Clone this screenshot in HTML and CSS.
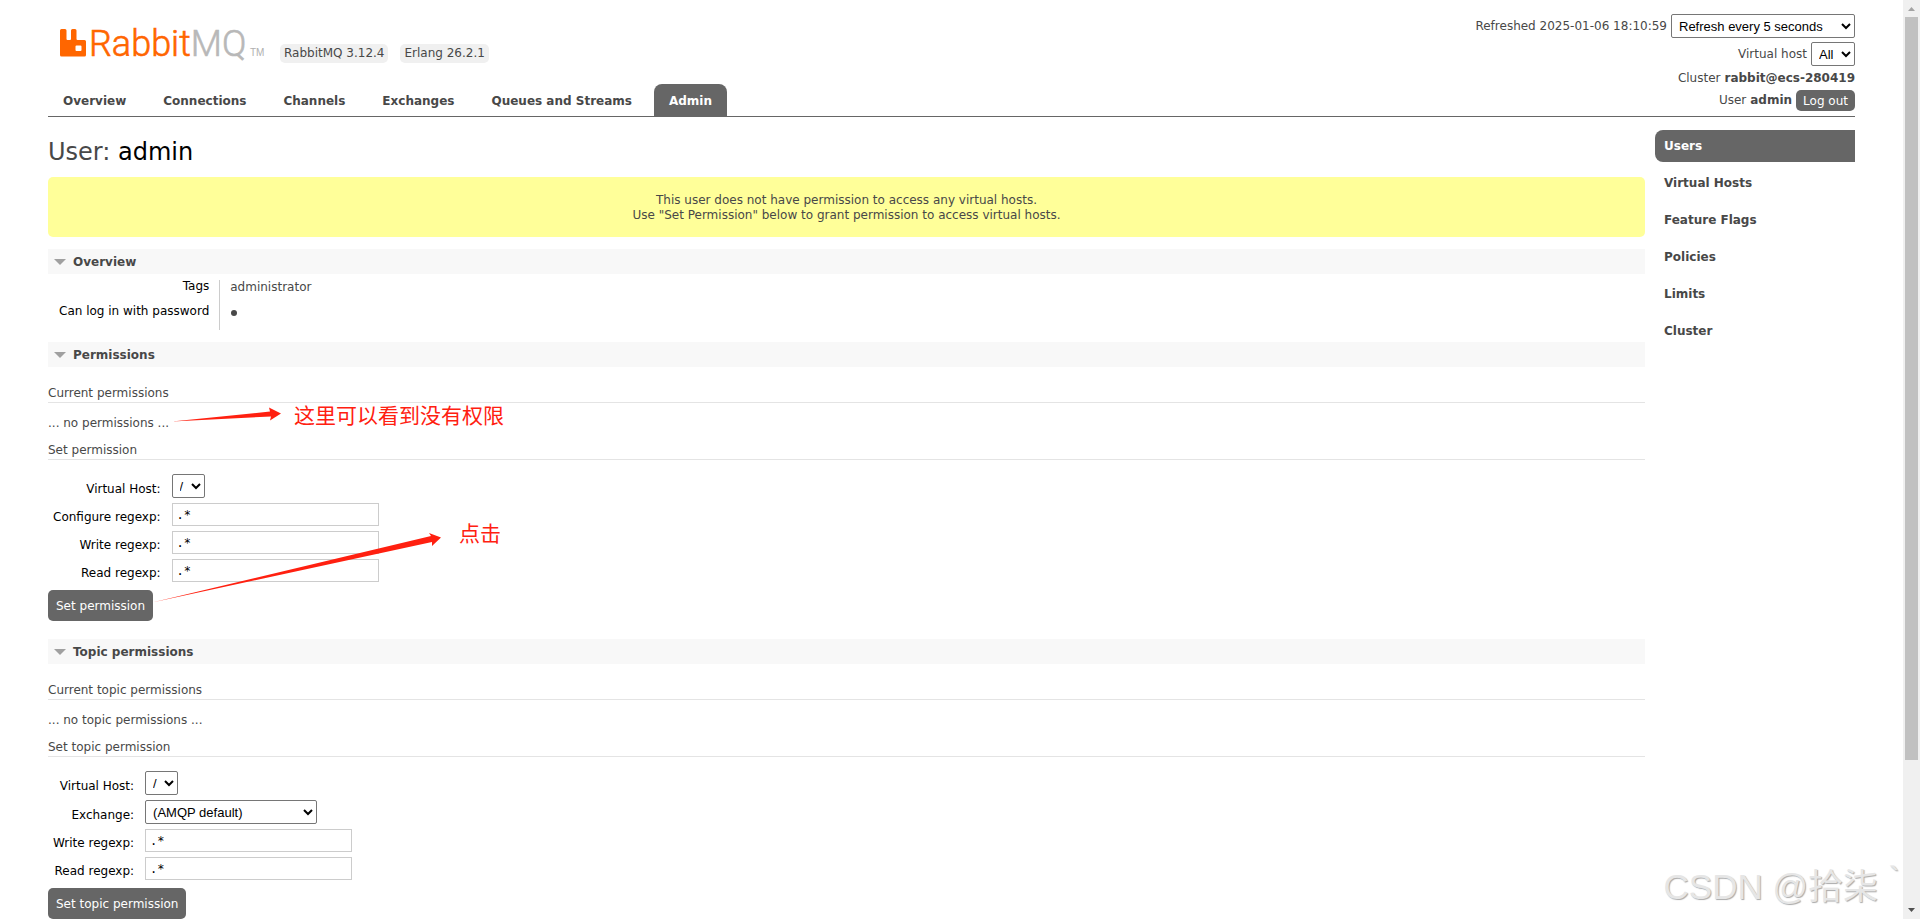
FILE: index.html
```html
<!DOCTYPE html>
<html lang="en">
<head>
<meta charset="utf-8">
<title>RabbitMQ Management</title>
<link rel="stylesheet" href="styles.css">
</head>
<body>
<div class="page">
  <header class="header">
    <div class="header-left">
      <div class="brand">
        <a class="logo" href="#" aria-label="RabbitMQ">
          <svg width="206" height="36" viewBox="0 0 206 36">
            <path class="logo-mark" d="M1.500 2h3.500q1.500 0 1.500 1.500v8.500q0 1 1 1h2.500q1 0 1-1V3.500q0-1.500 1.500-1.500h2.500q1.500 0 1.500 1.500v8.500q0 1 1 1h7q1.500 0 1.500 1.500v13.500q0 1.500-1.500 1.500h-23q-1.500 0-1.500-1.500V3.500q0-1.500 1.500-1.500zM16.500 18.500q-1 0-1 1v3.500q0 1 1 1h4q1 0 1-1v-3.500q0-1-1-1z"/>
            <text class="logo-text" x="29" y="29">Rabbit<tspan class="logo-grey">MQ</tspan></text>
            <text class="logo-tm" x="190" y="29">TM</text>
          </svg>
        </a>
        <span class="version">RabbitMQ 3.12.4</span>
        <span class="version">Erlang 26.2.1</span>
      </div>
      <nav class="tabs">
        <a href="#">Overview</a>
        <a href="#">Connections</a>
        <a href="#">Channels</a>
        <a href="#">Exchanges</a>
        <a href="#">Queues and Streams</a>
        <a href="#" class="selected">Admin</a>
      </nav>
    </div>
    <div class="status">
      <div class="status-row">
        <label for="refresh">Refreshed 2025-01-06 18:10:59</label>
        <select id="refresh" class="select-refresh"><option>Refresh every 5 seconds</option></select>
      </div>
      <div class="status-row">
        <label for="vhost">Virtual host</label>
        <select id="vhost" class="select-all"><option>All</option></select>
      </div>
      <div class="status-row">Cluster <b>rabbit@ecs-280419</b></div>
      <div class="status-row">User <b>admin</b> <button class="logout" type="button">Log out</button></div>
    </div>
  </header>

  <div class="columns">
    <main class="main">
      <h1>User: <b>admin</b></h1>
      <p class="warning">This user does not have permission to access any virtual hosts.<br>Use "Set Permission" below to grant permission to access virtual hosts.</p>

      <section>
        <h2>Overview</h2>
        <table class="facts">
          <tr><th scope="row">Tags</th><td>administrator</td></tr>
          <tr><th scope="row">Can log in with password</th><td><span class="dot"></span></td></tr>
        </table>
      </section>

      <section>
        <h2>Permissions</h2>
        <h3>Current permissions</h3>
        <p class="empty">... no permissions ...</p>
        <h3>Set permission</h3>
        <form class="form">
          <div class="fields">
            <label for="p-vhost">Virtual Host:</label>
            <select id="p-vhost" class="select-slash"><option>/</option></select>
            <label for="p-conf">Configure regexp:</label>
            <input id="p-conf" type="text" value=".*">
            <label for="p-write">Write regexp:</label>
            <input id="p-write" type="text" value=".*">
            <label for="p-read">Read regexp:</label>
            <input id="p-read" type="text" value=".*">
          </div>
          <button class="submit" type="button">Set permission</button>
        </form>
      </section>

      <section>
        <h2>Topic permissions</h2>
        <h3>Current topic permissions</h3>
        <p class="empty">... no topic permissions ...</p>
        <h3>Set topic permission</h3>
        <form class="form form-last">
          <div class="fields">
            <label for="t-vhost">Virtual Host:</label>
            <select id="t-vhost" class="select-slash"><option>/</option></select>
            <label for="t-exchange">Exchange:</label>
            <select id="t-exchange" class="select-exchange"><option>(AMQP default)</option></select>
            <label for="t-write">Write regexp:</label>
            <input id="t-write" type="text" value=".*">
            <label for="t-read">Read regexp:</label>
            <input id="t-read" type="text" value=".*">
          </div>
          <button class="submit" type="button">Set topic permission</button>
        </form>
      </section>
    </main>

    <nav class="side">
      <a href="#" class="selected">Users</a>
      <a href="#">Virtual Hosts</a>
      <a href="#">Feature Flags</a>
      <a href="#">Policies</a>
      <a href="#">Limits</a>
      <a href="#">Cluster</a>
    </nav>
  </div>

  <svg class="arrows" width="520" height="640" viewBox="0 0 520 640" aria-hidden="true">
    <path d="M172 421.500L270 411.500L269 407.500L281 413.500L270 420.500L271 416.500Z"/>
    <path d="M152 602.500L431 536L429 533L441 537.500L432 546L432 542Z"/>
  </svg>
  <span class="note note-permissions" lang="zh">这里可以看到没有权限</span>
  <span class="note note-click" lang="zh">点击</span>
  <span class="watermark" lang="zh">CSDN @拾柒｀</span>
</div>
<div class="scrollbar" aria-hidden="true">
  <svg width="17" height="17" viewBox="0 0 17 17"><path class="arrow-up" d="M5 11h7L8.500 7z"/></svg>
  <div class="track"><div class="thumb"></div></div>
  <svg width="17" height="17" viewBox="0 0 17 17"><path class="arrow-down" d="M5 6h7L8.500 10z"/></svg>
</div>
</body>
</html>
```

FILE: styles.css
```css
* { box-sizing: border-box; }

body {
  margin: 0;
  display: flex;
  min-height: 100vh;
  background: #fff;
  color: #484848;
  font: 12px/15px Verdana, "DejaVu Sans", sans-serif;
}

a { color: inherit; text-decoration: none; }
h1, h2, h3, p { margin: 0; font-weight: normal; }

.page {
  position: relative;
  flex: 1;
  min-width: 0;
  padding: 0 48px;
  overflow: hidden;
}

/* Header */
.header {
  display: flex;
  justify-content: space-between;
  padding-top: 14px;
  border-bottom: 1px solid #666;
}
.header-left {
  display: flex;
  flex-direction: column;
  justify-content: space-between;
}
.brand {
  display: flex;
  align-items: flex-end;
  gap: 12px;
  padding: 13px 0 0 12px;
}
.logo { display: block; height: 36px; margin-right: 2px; }
.logo svg { display: block; overflow: visible; }
.logo-mark { fill: #f60; fill-rule: evenodd; }
.logo-text {
  fill: #f60;
  stroke: #f60;
  stroke-width: 0.6px;
  font: 300 36px Roboto, sans-serif;
}
.logo-grey { fill: #b8b8b8; stroke: #b8b8b8; }
.logo-tm { fill: #b0b0b0; font: 10px "Liberation Sans", sans-serif; }
.version {
  padding: 2px 4px;
  border-radius: 5px;
  background: #f0f0f0;
}
.tabs { display: flex; gap: 7px; font-weight: bold; }
.tabs a {
  padding: 10px 15px 7px;
  border-radius: 8px 8px 0 0;
}
.tabs .selected { background: #666; color: #fff; }

.status {
  display: flex;
  flex-direction: column;
  gap: 4px;
  padding-bottom: 5px;
}
.status-row {
  display: flex;
  align-items: center;
  justify-content: flex-end;
  gap: 4px;
  min-height: 16px;
}
.logout {
  height: 21px;
  padding: 1px 7px 0;
  border: 0;
  border-radius: 5px;
  background: #666;
  color: #fff;
  font: 12px/15px Verdana, "DejaVu Sans", sans-serif;
}

select {
  height: 24px;
  margin: 0;
  padding: 0 3px;
  border: 1px solid #767676;
  border-radius: 2px;
  background-color: #fff;
  color: #000;
  font: 13px "Liberation Sans", Arial, sans-serif;
}
.select-refresh { width: 184px; }
.select-all { width: 44px; }
.select-slash { width: 33px; }
.select-exchange { width: 172px; }

/* Content */
.columns { display: flex; gap: 10px; padding-top: 13px; }
.main { flex: 1; min-width: 0; }
h1 {
  padding: 7px 0 10px;
  font-size: 24px;
  line-height: 30px;
}
h1 b { color: #000; font-weight: normal; }
.warning {
  padding: 16px 15px 14px;
  margin-bottom: 12px;
  border-radius: 5px;
  background: #ff9;
  text-align: center;
}
h2 {
  display: flex;
  align-items: center;
  gap: 7px;
  height: 25px;
  padding: 1px 0 0 6px;
  background: #f8f8f8;
  font-size: 12px;
  font-weight: bold;
}
h2::before {
  content: "";
  border: 6px solid transparent;
  border-top-color: #a0a0a0;
  border-bottom: 0;
}
h3 {
  height: 19px;
  padding-top: 2px;
  border-bottom: 1px solid #e4e4e4;
  font-size: 12px;
}
h2 + h3 { margin-top: 17px; }
.empty { padding: 13px 0 10px; }

.facts {
  margin: 6px 0 12px;
  border-collapse: collapse;
}
.facts tr { height: 25px; }
.facts th, .facts td { padding: 0 10px; vertical-align: top; }
.facts th {
  padding-left: 11px;
  border-right: 1px solid #ccc;
  color: #000;
  font-weight: normal;
  line-height: 13px;
  text-align: right;
}
.dot {
  display: block;
  width: 6px;
  height: 6px;
  margin: 5px 1px 0;
  border-radius: 3px;
  background: #484848;
}

.form { padding: 14px 0 18px; }
.form-last { padding-bottom: 0; }
.fields {
  display: grid;
  grid-template-columns: max-content max-content;
  column-gap: 11px;
  row-gap: 5px;
  padding: 0 0 8px 5px;
  justify-items: start;
}
.fields label {
  align-self: end;
  justify-self: end;
  padding-bottom: 1px;
  color: #000;
}
.fields input {
  width: 207px;
  height: 23px;
  padding: 0 4px;
  border: 1px solid #ccc;
  color: #000;
  font: 12px "DejaVu Sans Mono", monospace;
}
.submit {
  display: block;
  height: 31px;
  padding: 1px 8px 0;
  border: 0;
  border-radius: 5px;
  background: #666;
  color: #fff;
  font: 12px/15px Verdana, "DejaVu Sans", sans-serif;
}

.side { width: 200px; font-weight: bold; }
.side a {
  display: block;
  height: 32px;
  margin-bottom: 5px;
  padding: 9px 9px 8px;
  border-radius: 8px 0 0 8px;
}
.side .selected { background: #666; color: #fff; }

/* Marks drawn over the page */
.arrows { position: absolute; left: 0; top: 0; fill: #ff2010; pointer-events: none; }
.note {
  position: absolute;
  color: #ff2010;
  font: 21px/30px "Noto Sans CJK SC", sans-serif;
}
.note-permissions { left: 294px; top: 399px; }
.note-click { left: 459px; top: 517px; }
.watermark {
  position: absolute;
  right: -10px;
  bottom: 7px;
  white-space: nowrap;
  color: #e6e6e6;
  text-shadow: 1px 1px 1px #aaa;
  font: 35px/50px "Liberation Sans", "Noto Sans CJK SC", sans-serif;
}

.scrollbar {
  display: flex;
  flex-direction: column;
  width: 17px;
  background: #f0f0f0;
}
.scrollbar svg { display: block; }
.arrow-up { fill: #a3a3a3; }
.arrow-down { fill: #505050; }
.track { flex: 1; padding: 0 2px; }
.thumb { height: 84%; background: #c1c1c1; }
```
